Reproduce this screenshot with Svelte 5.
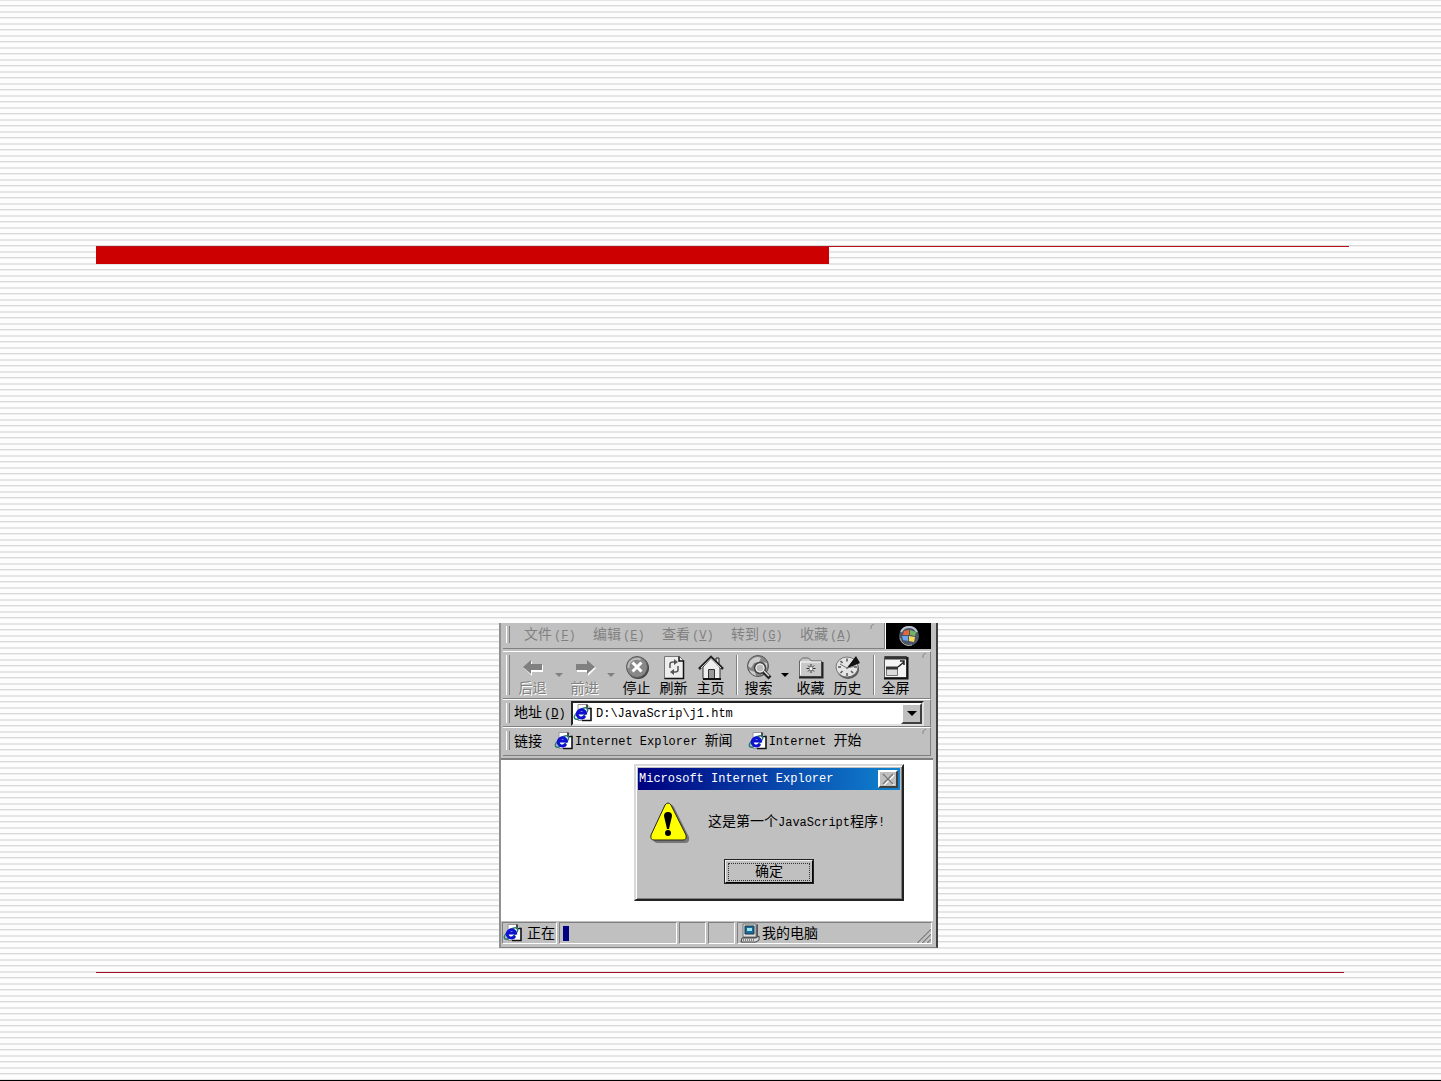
<script>
    const menus = [
        { name: '文件', key: 'F' },
        { name: '编辑', key: 'E' },
        { name: '查看', key: 'V' },
        { name: '转到', key: 'G' },
        { name: '收藏', key: 'A' }
    ];

    const tools = [
        { id: 'back', label: '后退', disabled: true, more: true },
        { id: 'forward', label: '前进', disabled: true, more: true },
        { id: 'stop', label: '停止' },
        { id: 'refresh', label: '刷新' },
        { id: 'home', label: '主页', last: true },
        { id: 'search', label: '搜索', more: true },
        { id: 'favorites', label: '收藏' },
        { id: 'history', label: '历史', last: true },
        { id: 'full', label: '全屏' }
    ];

    const links = [
        { id: 'news', en: 'Internet Explorer ', zh: '新闻' },
        { id: 'start', en: 'Internet ', zh: '开始' }
    ];

    let address = $state('D:\\JavaScrip\\j1.htm');
</script>

{#snippet pageIcon()}
    <svg width="20" height="20" viewBox="0 0 20 20" aria-hidden="true">
        <path d="M5 1.5h9l4 4v12H5z" fill="#fff" stroke="#999" />
        <path d="M14 1.5v4h4v12H9" fill="none" stroke="#111" stroke-width="1.5" />
        <ellipse cx="8" cy="10.5" rx="8" ry="3.5" transform="rotate(-38 8 10.5)" fill="none" stroke="#287c78" stroke-width="1.5" />
        <path d="M12 13A4.2 4.2 0 1 1 12.500 10H5" fill="none" stroke="#1010d0" stroke-width="2.8" />
    </svg>
{/snippet}

{#snippet corner()}
    <svg class="corner" width="5" height="6" viewBox="0 0 5 6" aria-hidden="true">
        <path d="M1 6V3l3-2" fill="none" stroke="#888" />
    </svg>
{/snippet}

{#snippet toolIcon(id)}
    <svg width="26" height="25" viewBox="0 0 26 25" aria-hidden="true">
        {#if id === 'back'}
            <path d="M4 13l8-7v4h11v7H12v4z" fill="#fff" />
            <path d="M3 12l8-7v4h11v6H11v4z" fill="#808080" />
        {:else if id === 'forward'}
            <path d="M24 13l-8-7v4H5v7h11v4z" fill="#fff" />
            <path d="M23 12l-8-7v4H4v6h11v4z" fill="#808080" />
        {:else if id === 'stop'}
            <circle cx="14" cy="13" r="11" fill="#444" />
            <circle cx="13" cy="12" r="10.5" fill="#888" stroke="#5c5c5c" />
            <path d="M4.5 13a8.500 8.500 0 0 1 12-8.500" fill="none" stroke="#bbb" stroke-width="2" />
            <path d="M8.5 7.500l9 9m0-9l-9 9" stroke="#fff" stroke-width="3" />
        {:else if id === 'refresh'}
            <path d="M3.5 1.5h15l4 4v18h-19z" fill="#eee" stroke="#777" />
            <path d="M18 1.5v4.500h4.500v17.500h-19" fill="none" stroke="#111" stroke-width="1.5" />
            <path d="M9 13V9q0-2 3-2h2M17 11v4q0 2-3 2h-2" fill="none" stroke="#555" stroke-width="1.5" />
            <path d="M13 4l4 3-4 3zM13 14l-4 3 4 3z" fill="#555" />
        {:else if id === 'home'}
            <path d="M18 3h3v7h-3z" fill="#ddd" stroke="#222" />
            <path d="M5 12v11.500h17V12l-9-9z" fill="#eee" stroke="#333" />
            <path d="M1 14L13 2l12 12" fill="none" stroke="#222" stroke-width="2.5" />
            <path d="M3 13L13 3.500l10 9.500" fill="none" stroke="#ddd" />
            <path d="M10.5 14.500h6v9h-6z" fill="#999" stroke="#333" />
            <path d="M5 24h18" stroke="#111" stroke-width="2" />
        {:else if id === 'search'}
            <circle cx="12" cy="11" r="10.5" fill="#888" stroke="#555" />
            <path d="M4 6c4-4 7-5 11-3l-2 4-5 1-3 5-3-2zM16 7l5 1v5l-4-2zM3 15l6 2 1 4-4-2z" fill="#ccc" />
            <circle cx="14" cy="13" r="5.5" fill="#bbb" stroke="#444" stroke-width="1.5" />
            <circle cx="14" cy="13" r="4" fill="none" stroke="#eee" />
            <path d="M18 17l6 6" stroke="#222" stroke-width="4" />
            <path d="M18 16l5 5" stroke="#ddd" stroke-width="1.5" />
        {:else if id === 'favorites'}
            <path d="M1.5 21.500V6l3-3h6l3 3h10v15.500z" fill="#c8c8c8" stroke="#666" />
            <path d="M2.5 20V7H23" fill="none" stroke="#fff" />
            <path d="M1 22.500h23.500V7" fill="none" stroke="#222" stroke-width="2" />
            <path d="M13 9v9M8.500 13.500h9M10 10.500l6 6m0-6l-6 6" stroke="#333" />
            <circle cx="13" cy="13.5" r="1.5" fill="#fff" />
        {:else if id === 'history'}
            <ellipse cx="13" cy="14" rx="11" ry="10" fill="#555" />
            <ellipse cx="12" cy="12" rx="11" ry="10" fill="#e4e4e4" stroke="#777" />
            <path d="M12 3.500v3M3 12h3M12 18v3M5.500 6l2 2M5.500 18l2-2M18 18l-2-2M19 12h3" stroke="#555" stroke-width="1.5" />
            <path d="M11 14L21 1l4 7z" fill="#111" />
            <path d="M5 9l7 4 9-2" fill="none" stroke="#777" />
        {:else}
            <path d="M1.5 1.500h22v21h-22z" fill="#f4f4f4" stroke="#555" />
            <path d="M2 3h22" stroke="#333" stroke-width="3" />
            <path d="M1 23.500h23.500V2" fill="none" stroke="#111" stroke-width="2" />
            <path d="M3.5 12.500h11v8h-11z" fill="#ddd" stroke="#777" />
            <path d="M3 13h12" stroke="#333" stroke-width="3" />
            <path d="M15 12l6-5m-4-1h4v4" fill="none" stroke="#222" stroke-width="1.5" />
        {/if}
    </svg>
{/snippet}

<main class="slide">
    <div class="title-rule"><div class="title-bar"></div></div>

    <section class="browser">
        <div class="top">
            <nav class="band menu">
                <i class="grip"></i>
                {#each menus as menu (menu.key)}
                    <button disabled>{menu.name}<span class="en">(<u>{menu.key}</u>)</span></button>
                {/each}
                {@render corner()}
            </nav>
            <div class="logo">
                <svg width="24" height="24" viewBox="0 0 24 24" aria-hidden="true">
                    <circle cx="12" cy="12" r="10" fill="#4c5666" />
                    <path d="M4 8a9 9 0 0 1 16 0" fill="none" stroke="#bcc5d0" stroke-width="2" />
                    <path d="M7 7l5-1v5H6z" fill="#e56a38" />
                    <path d="M13 6l6 2-1 4-5-1z" fill="#73b55f" />
                    <path d="M5 12h6v5l-5-1z" fill="#6ba6ef" />
                    <path d="M12 12l6 1-1 5-5-1z" fill="#f5db57" />
                    <path d="M3 14a9 9 0 0 0 12 7" fill="none" stroke="#aaa" />
                </svg>
            </div>
        </div>

        <div class="band tools">
            <i class="grip"></i>
            {#each tools as tool (tool.id)}
                <button class="tool" disabled={tool.disabled}>
                    {@render toolIcon(tool.id)}
                    <span>{tool.label}</span>
                </button>
                {#if tool.more}
                    <button class="more" disabled={tool.disabled} aria-label={tool.label}><i class="caret"></i></button>
                {/if}
                {#if tool.last}<i class="split"></i>{/if}
            {/each}
            {@render corner()}
        </div>

        <div class="band address">
            <i class="grip"></i>
            <label for="address">地址<span class="en">(<u>D</u>)</span></label>
            <div class="field">
                {@render pageIcon()}
                <input id="address" type="text" bind:value={address} />
                <button class="drop" aria-label="地址"><i class="caret"></i></button>
            </div>
        </div>

        <div class="band links">
            <i class="grip"></i>
            <span class="caption">链接</span>
            {#each links as link (link.id)}
                <a href="#{link.id}">{@render pageIcon()}<span><span class="en">{link.en}</span>{link.zh}</span></a>
            {/each}
            {@render corner()}
        </div>

        <div class="view">
            <div class="dialog" role="alertdialog" aria-labelledby="dialog-title">
                <header>
                    <h1 id="dialog-title" class="en">Microsoft Internet Explorer</h1>
                    <button class="close" aria-label="关闭">
                        <svg width="14" height="12" viewBox="0 0 14 12" aria-hidden="true">
                            <path d="M3 2l10 10m0-10L3 12" stroke="#fff" stroke-width="1.5" />
                            <path d="M2 1l10 10m0-10L2 11" stroke="#777" stroke-width="1.5" />
                        </svg>
                    </button>
                </header>
                <div class="message">
                    <svg width="42" height="42" viewBox="0 0 42 42" aria-hidden="true">
                        <path d="M17 5q4-5 7 0l15 30q1 6-4 6H7q-5-1-3-6z" fill="#777" />
                        <path d="M15 3q3-4 6 0l15 30q1 5-3 5H4q-4 0-3-5z" fill="#ff0" stroke="#222" />
                        <path d="M14 14q0-4 4-4t4 4l-3 13h-2z" fill="#000" />
                        <circle cx="18" cy="31" r="3" fill="#000" />
                    </svg>
                    <p>这是第一个<span class="en">JavaScript</span>程序<span class="en">!</span></p>
                </div>
                <button class="ok"><span>确定</span></button>
            </div>
        </div>

        <footer class="status">
            <div class="cell loading">{@render pageIcon()}<span>正在</span></div>
            <div class="cell progress"><i></i></div>
            <div class="cell small"></div>
            <div class="cell small"></div>
            <div class="cell zone">
                <svg width="20" height="20" viewBox="0 0 20 20" aria-hidden="true">
                    <path d="M3 2h13l2-1v13l-2 1H3z" fill="#555" />
                    <path d="M3 1h13v13H3z" fill="#ddd" stroke="#777" />
                    <path d="M5 3h9v8H5z" fill="#176d9d" stroke="#234" />
                    <path d="M7 5h5v3H7z" fill="#9de4ed" />
                    <path d="M2 15h14l3-2v4l-3 2H1z" fill="#ddd" stroke="#444" />
                    <path d="M3 17h11" stroke="#333" stroke-dasharray="1 1" />
                </svg>
                <span>我的电脑</span>
                <svg class="resize" width="16" height="16" viewBox="0 0 16 16" aria-hidden="true">
                    <path d="M1 16L16 1M6 16L16 6M11 16l5-5" stroke="#fff" />
                    <path d="M2 16L16 2M7 16l9-9M12 16l4-4" stroke="#808080" stroke-width="1.5" />
                </svg>
            </div>
        </footer>
    </section>

    <div class="bottom-rule"></div>
</main>

<style>
:global(body) {
    margin: 0;
}
.slide {
    box-sizing: border-box;
    display: flex;
    flex-direction: column;
    min-height: 100vh;
    padding: 246px 92px 0 96px;
    border-bottom: 1px solid #000;
    background: repeating-linear-gradient(
        #e6e6e6 0 1px,
        #fdfdfd 1px 5px,
        #d9d9d9 5px 6px,
        #f0f0f0 6px 7px,
        #fdfdfd 7px 11px,
        #e6e6e6 11px 12px
    );
    color: #000;
    font-family: "Liberation Sans", "Noto Sans CJK SC", sans-serif;
    font-size: 14px;
    line-height: 18px;
}
.title-rule {
    border-top: 1px solid #b5121b;
}
.title-bar {
    width: 58.5%;
    height: 17px;
    background: #c00;
}
.bottom-rule {
    margin: 24px 5px 0 0;
    border-top: 1px solid #a01028;
}
.en {
    font-family: "Liberation Mono", monospace;
    font-size: 12px;
    font-weight: normal;
    white-space: pre;
}
button {
    padding: 0;
    border: 0;
    background: none;
    color: inherit;
    font: inherit;
}
svg {
    display: block;
    flex: none;
}
.browser {
    box-sizing: border-box;
    align-self: center;
    width: 439px;
    margin: 359px 8px 0 0;
    border-left: 2px solid #909090;
    border-right: 2px solid #404040;
    border-bottom: 1px solid #808080;
    background: #c0c0c0;
}
.top {
    display: flex;
    height: 26px;
    margin-right: 5px;
}
.band {
    box-sizing: border-box;
    display: flex;
    align-items: center;
    margin: 0 5px 0 2px;
    border-top: 1px solid #fff;
    border-right: 1px solid #808080;
    border-bottom: 1px solid #808080;
}
.grip {
    flex: none;
    align-self: stretch;
    width: 2px;
    margin: 3px 4px 3px 3px;
    border-left: 1px solid #fff;
    border-right: 1px solid #808080;
}
.corner {
    align-self: flex-start;
    margin: 0 3px 0 auto;
}
.menu {
    flex: 1;
    margin-right: 0;
    padding-bottom: 2px;
    border-top: 0;
}
.menu .grip {
    margin-right: 14px;
}
.menu button {
    width: 69px;
    text-align: left;
    color: #808080;
}
.menu .corner {
    margin-left: 1px;
}
.menu .en {
    margin-left: 2px;
}
.logo {
    display: flex;
    align-items: center;
    justify-content: center;
    width: 45px;
    border-left: 1px solid #fff;
    background: #000;
}
.tools {
    height: 48px;
    margin-top: 2px;
}
.tools .grip {
    margin-right: 4px;
}
.tool {
    display: flex;
    flex-direction: column;
    align-items: center;
    width: 37px;
}
.tool span {
    line-height: 16px;
}
.tool:disabled {
    color: #808080;
    text-shadow: 1px 1px #fff;
}
.more {
    display: flex;
    justify-content: center;
    width: 15px;
    height: 4px;
}
.caret {
    border: 4px solid transparent;
    border-top-color: #000;
    border-bottom: 0;
}
.more:disabled .caret {
    border-top-color: #808080;
}
.split {
    align-self: stretch;
    margin: 3px 2px 3px 7px;
    border-left: 1px solid #808080;
    border-right: 1px solid #fff;
}
.address {
    height: 28px;
}
.address label {
    width: 57px;
}
.address label .en {
    margin-left: 2px;
}
.field {
    box-sizing: border-box;
    display: flex;
    flex: 1;
    align-items: center;
    height: 25px;
    margin-right: 6px;
    border: 2px solid;
    border-color: #222 #e0e0e0 #e0e0e0 #222;
    background: #fff;
}
.field input {
    flex: 1;
    min-width: 0;
    padding: 2px 0 0 3px;
    border: 0;
    outline: 0;
    background: none;
    font-family: "Liberation Mono", monospace;
    font-size: 12px;
}
.drop, .close, .ok {
    box-sizing: border-box;
    display: flex;
    align-items: center;
    justify-content: center;
    border: 2px solid;
    border-color: #fff #404040 #404040 #fff;
    background: #c0c0c0;
}
.drop {
    width: 21px;
    height: 21px;
}
.drop .caret {
    border-width: 5px 5px 0;
}
.links {
    height: 29px;
    padding-bottom: 2px;
}
.caption {
    width: 40px;
}
.links a {
    display: flex;
    align-items: center;
    gap: 1px;
    margin-right: 15px;
    color: inherit;
    text-decoration: none;
}
.view {
    box-sizing: border-box;
    height: 163px;
    margin: 2px 3px 0 0;
    padding: 4px 0 0 133px;
    border-top: 2px solid #808080;
    background: #fff;
}
.dialog {
    box-sizing: border-box;
    width: 270px;
    height: 137px;
    padding: 2px;
    border: 2px solid;
    border-color: #d8d8d8 #222 #222 #d8d8d8;
    background: #c0c0c0;
    box-shadow: inset 1px 1px #fff, inset -1px -1px #808080;
}
.dialog header {
    display: flex;
    align-items: center;
    height: 22px;
    padding: 0 2px 0 1px;
    background: linear-gradient(to right, #000080, #1084d0);
}
h1 {
    flex: 1;
    margin: 0;
    color: #fff;
}
.close {
    width: 20px;
    height: 18px;
}
.message {
    display: flex;
    align-items: center;
    gap: 16px;
    padding: 12px 0 0 12px;
}
.message p {
    margin: 0;
    padding-bottom: 2px;
}
.ok {
    width: 90px;
    height: 25px;
    margin: 15px 0 0 86px;
    border-color: #eee #000 #000 #eee;
    outline: 1px solid #222;
    outline-offset: -1px;
}
.ok span {
    flex: 1;
    margin: 0 2px;
    padding-bottom: 2px;
    border: 1px dotted #333;
    line-height: 14px;
}
.status {
    display: flex;
    gap: 2px;
    height: 22px;
    padding: 1px 4px 3px 1px;
}
.cell {
    box-sizing: border-box;
    display: flex;
    align-items: center;
    border: 1px solid;
    border-color: #808080 #fff #fff #808080;
}
.loading {
    gap: 4px;
    width: 55px;
}
.progress {
    width: 118px;
    padding-left: 3px;
}
.progress i {
    width: 6px;
    height: 15px;
    background: #000080;
}
.small {
    width: 27px;
}
.zone {
    flex: 1;
    gap: 2px;
    padding-left: 2px;
}
.resize {
    align-self: flex-end;
    margin-left: auto;
}
</style>
